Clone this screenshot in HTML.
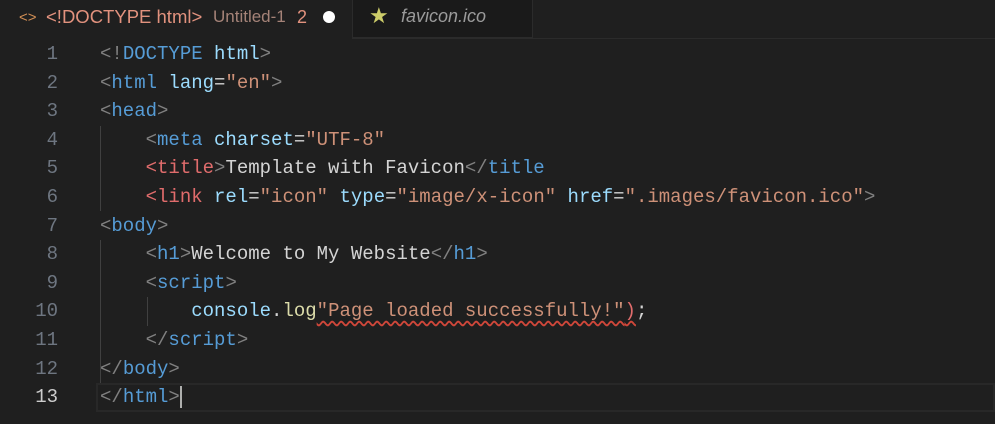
<!DOCTYPE html>
<html><head><style>
body{margin:0;width:995px;height:424px;background:#1f1f1f;overflow:hidden;position:relative;font-family:"Liberation Mono",monospace}
.tabbar{position:absolute;left:0;top:0;width:995px;height:39px;background:#1f1f1f}
.t1{position:absolute;left:0;top:0;height:38px;width:352px;font-family:"Liberation Sans",sans-serif;font-size:17px;line-height:34px;white-space:nowrap}
.t2{position:absolute;left:352px;top:-1px;width:179px;height:38px;background:#1a1a1a;border:1px solid #2b2b2b;border-top:none;font-family:"Liberation Sans",sans-serif;font-size:18px;line-height:34px}
.line{position:absolute;left:352px;right:0;top:38px;height:1px;background:#2b2b2b}
.code{position:absolute;left:0;top:40px;width:995px}
.r{position:relative;height:28.6px;line-height:28.6px;font-size:19px;white-space:pre;color:#d4d4d4}
.n{position:absolute;left:0;width:58px;text-align:right;color:#6e7681}
.c{position:absolute;left:100px}
.g{color:#808080}.b{color:#569cd6}.a{color:#9cdcfe}.s{color:#ce9178}.x{color:#e06c6c}
.guide{position:absolute;width:1px;background:#404040}
.cur{position:absolute;left:96px;right:0;border:2px solid #282828}
</style></head><body>
<div class="tabbar"></div>
<div class="t1"><span style="position:absolute;left:19px;top:1px;color:#d18e54;font-size:15px">&lt;&gt;</span><span style="position:absolute;left:46px;color:#e2927e;font-size:18.5px">&lt;!DOCTYPE html&gt;</span><span style="position:absolute;left:213px;color:#a58378">Untitled-1</span><span style="position:absolute;left:297px;color:#e2927e;font-size:18px">2</span><span style="position:absolute;left:323px;top:11px;width:12px;height:12px;border-radius:50%;background:#fff"></span></div>
<div class="t2"><span style="position:absolute;left:16px;top:0;color:#cdcd6a;font-size:22px">★</span><span style="position:absolute;left:48px;color:#9a9a9a;font-style:italic">favicon.ico</span></div>
<div class="line"></div>
<div class="code">
<div class="guide" style="left:100px;top:86px;height:85px"></div>
<div class="guide" style="left:100px;top:200px;height:143px"></div>
<div class="guide" style="left:147px;top:257px;height:29px"></div>
<div class="cur" style="top:343px;height:25px"></div>
<div class="r"><span class="n">1</span><span class="c"><span class="g">&lt;!</span><span class="b">DOCTYPE</span> <span class="a">html</span><span class="g">&gt;</span></span></div>
<div class="r"><span class="n">2</span><span class="c"><span class="g">&lt;</span><span class="b">html</span> <span class="a">lang</span>=<span class="s">"en"</span><span class="g">&gt;</span></span></div>
<div class="r"><span class="n">3</span><span class="c"><span class="g">&lt;</span><span class="b">head</span><span class="g">&gt;</span></span></div>
<div class="r"><span class="n">4</span><span class="c">    <span class="g">&lt;</span><span class="b">meta</span> <span class="a">charset</span>=<span class="s">"UTF-8"</span></span></div>
<div class="r"><span class="n">5</span><span class="c">    <span class="x">&lt;title</span><span class="g">&gt;</span>Template with Favicon<span class="g">&lt;/</span><span class="b">title</span></span></div>
<div class="r"><span class="n">6</span><span class="c">    <span class="x">&lt;link</span> <span class="a">rel</span>=<span class="s">"icon"</span> <span class="a">type</span>=<span class="s">"image/x-icon"</span> <span class="a">href</span>=<span class="s">".images/favicon.ico"</span><span class="g">&gt;</span></span></div>
<div class="r"><span class="n">7</span><span class="c"><span class="g">&lt;</span><span class="b">body</span><span class="g">&gt;</span></span></div>
<div class="r"><span class="n">8</span><span class="c">    <span class="g">&lt;</span><span class="b">h1</span><span class="g">&gt;</span>Welcome to My Website<span class="g">&lt;/</span><span class="b">h1</span><span class="g">&gt;</span></span></div>
<div class="r"><span class="n">9</span><span class="c">    <span class="g">&lt;</span><span class="b">script</span><span class="g">&gt;</span></span></div>
<div class="r"><span class="n">10</span><span class="c">        <span class="a">console</span>.<span style="color:#dcdcaa">log</span><span class="s" style="text-decoration:underline wavy #d0473a;text-underline-offset:4px">"Page loaded successfully!"<span style="color:#e06c6c">)</span></span>;</span></div>
<div class="r"><span class="n">11</span><span class="c">    <span class="g">&lt;/</span><span class="b">script</span><span class="g">&gt;</span></span></div>
<div class="r"><span class="n">12</span><span class="c"><span class="g">&lt;/</span><span class="b">body</span><span class="g">&gt;</span></span></div>
<div class="r"><span class="n" style="color:#ccc">13</span><span class="c"><span class="g">&lt;/</span><span class="b">html</span><span class="g">&gt;</span><span style="display:inline-block;width:2px;height:22px;background:#aeafad;vertical-align:middle"></span></span></div>
</div>
</body></html>
